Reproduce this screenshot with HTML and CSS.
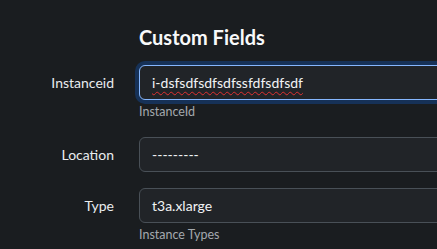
FILE: index.html
```html
<!DOCTYPE html>
<html lang="en">

<head>
  <meta charset="UTF-8" />
  <meta name="viewport" content="width=device-width, initial-scale=1.0" />
  <link rel="stylesheet" href="styles.css">
  <title>Custom Fields</title>
</head>

<body>
  <form class="fields">
    <h5 class="title">Custom Fields</h5>

    <label class="label" for="instanceid">Instanceid</label>
    <div class="field">
      <div class="input focused" id="instanceid"><span class="misspelled">i-dsfsdfsdfsdfssfdfsdfsdf</span></div>
      <div class="help">InstanceId</div>
    </div>

    <label class="label" for="location">Location</label>
    <div class="field">
      <div class="input select" id="location">---------</div>
    </div>

    <label class="label" for="type">Type</label>
    <div class="field">
      <div class="input select" id="type">t3a.xlarge</div>
      <div class="help">Instance Types</div>
    </div>
  </form>
</body>

</html>
```

FILE: styles.css
```css
* {
  margin: 0px;
  padding: 0px;
  box-sizing: border-box;
  font-family: Lato, "Noto Sans", sans-serif;
}

body {
  background-color: #1a1d20;
  color: #e9ecef;
  overflow: hidden;
}

.fields {
  display: grid;
  grid-template-columns: 114px 1fr;
  column-gap: 25px;
  align-items: start;
  padding-top: 25px;
  overflow: hidden;
}

.title {
  grid-column: 2;
  font-size: 20px;
  font-weight: 700;
  line-height: 1.2;
  color: #f8f9fa;
  margin-bottom: 16px;
}

.label {
  grid-column: 1;
  text-align: right;
  font-size: 14px;
  line-height: 21px;
  padding: 7px 0;
}

.field {
  grid-column: 2;
  margin-bottom: 16px;
}

.input {
  display: block;
  width: 340px;
  height: 35px;
  padding: 6px 12px;
  font-size: 14px;
  line-height: 21px;
  color: #f1f3f5;
  background-color: #212428;
  border: 1px solid #495057;
  border-radius: 6px;
}

.focused {
  border-color: #86b7fe;
  box-shadow: 0 0 0 4px rgba(13, 110, 253, 0.25);
}

.misspelled {
  text-decoration: underline wavy #e03131;
  text-decoration-thickness: 1px;
  text-underline-offset: 3px;
}

.help {
  margin-top: 3px;
  font-size: 12.5px;
  line-height: 18px;
  color: #a4a9ae;
}
```
